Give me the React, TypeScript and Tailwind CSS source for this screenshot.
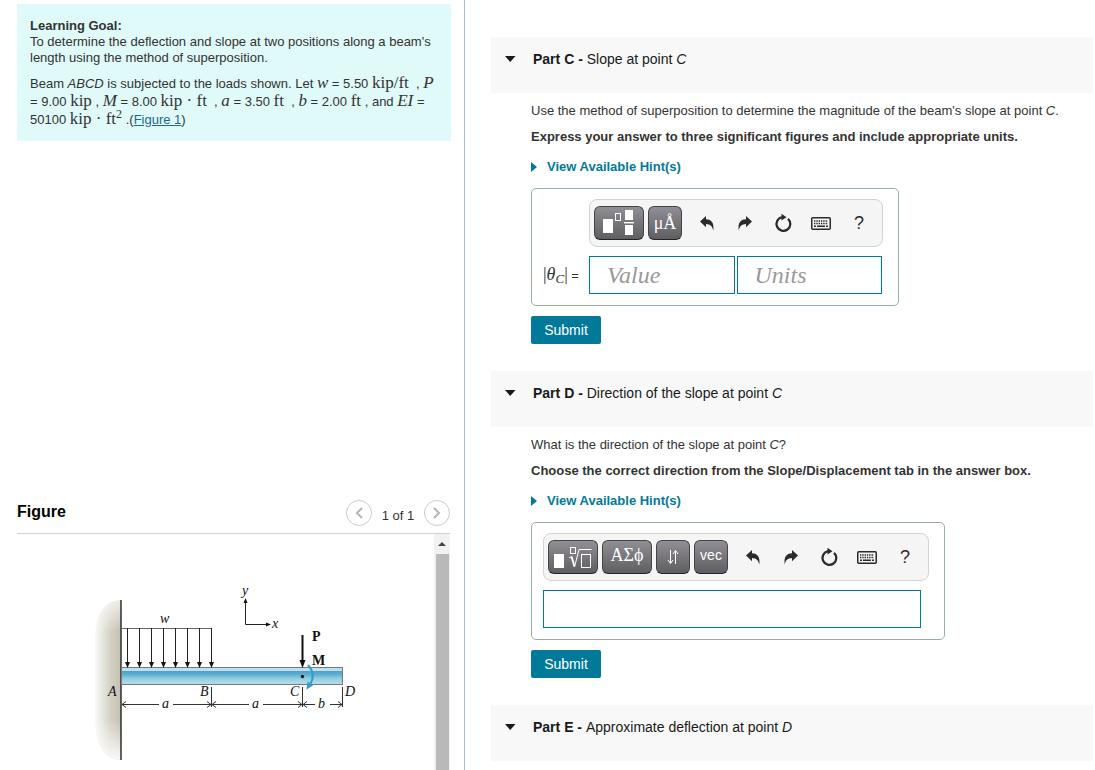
import type { ReactNode } from 'react';

const serif = "font-['Liberation_Serif','Times_New_Roman',serif]";

const loadArrows = [128, 140, 152, 164, 176, 188, 200, 212];

const Unit = ({ children }: { children: ReactNode }) => (
	<span className="font-['Liberation_Serif','Times_New_Roman',serif] text-[17px] leading-[0]">
		{children}
	</span>
);

const Var = ({ children }: { children: ReactNode }) => (
	<i className="font-['Liberation_Serif','Times_New_Roman',serif] text-[17px] leading-[0]">
		{children}
	</i>
);

const UndoIcon = ({ flip = false }: { flip?: boolean }) => (
	<svg
		width="14"
		height="15"
		viewBox="0 0 14 15"
		className={flip ? '-scale-x-100' : ''}
		fill="#2b2b2b"
	>
		<path d="M0 5.5 6 0v3.2C11.5 3.3 14.3 7 13.3 14.5 12.3 10.3 10.4 8.3 6 8.1v3.2z" />
	</svg>
);

const ResetIcon = () => (
	<svg width="18" height="20" viewBox="0 0 18 20">
		<path
			d="M14 5.800A6.900 6.900 0 1 1 8 4.200"
			fill="none"
			stroke="#2b2b2b"
			strokeWidth="2.3"
		/>
		<path d="M7.500 .8 12.500 4.200 7.500 7.600z" fill="#2b2b2b" />
	</svg>
);

const KeyboardIcon = () => (
	<svg width="20" height="13" viewBox="0 0 20 13" fill="none" stroke="#2b2b2b">
		<rect x=".75" y=".75" width="18.500" height="11.500" rx="1" strokeWidth="1.5" />
		<path d="M3 4h14M3 6.500h14" strokeWidth="1.4" strokeDasharray="1.4 .9" />
		<path d="M3 9.300h2M6 9.300h8M15 9.300h2" strokeWidth="1.4" />
	</svg>
);

const TemplatesIcon = () => (
	<svg width="32" height="28" viewBox="0 0 32 28" fill="#fff">
		<rect x="0" y="10" width="10" height="14" />
		<rect x="12.500" y="4.500" width="5" height="7" fill="none" stroke="#fff" />
		<rect x="22" y="1" width="8" height="10" />
		<rect x="21" y="13" width="10" height="1.400" />
		<rect x="22" y="16" width="8" height="10" />
	</svg>
);

const RootIcon = () => (
	<svg width="38" height="24" viewBox="0 0 38 24" fill="none" stroke="#fff">
		<rect x="0" y="9" width="10" height="14" fill="#fff" stroke="none" />
		<rect x="16.500" y="2.500" width="5" height="6" />
		<path d="M15 13l2.500-1.500" />
		<path d="M17.500 11.500l3 10" strokeWidth="2" />
		<path d="M20.500 22 25 4.500H37.500" />
		<rect x="27.500" y="9.500" width="9" height="13" />
	</svg>
);

const UpDownIcon = () => (
	<svg width="14" height="16" viewBox="0 0 14 16" fill="none" stroke="#fff">
		<path d="M4.500 1v13M2 11l2.500 3.500L7 11" />
		<path d="M9.500 15V2M7 5l2.500-3.500L12 5" />
	</svg>
);

const DarkButton = ({
	label,
	wide = false,
	children,
}: {
	label: string;
	wide?: boolean;
	children: ReactNode;
}) => (
	<button
		aria-label={label}
		className={`flex h-[34px] shrink-0 items-center justify-center rounded-md border border-[#444] border-b-[#222] bg-linear-to-b from-[#918f95] to-[#5f5e62] leading-7 text-white ${
			wide ? 'w-[50px]' : 'w-[34px]'
		}`}
	>
		{children}
	</button>
);

const ToolButton = ({ label, children }: { label: string; children: ReactNode }) => (
	<button
		aria-label={label}
		className="flex h-[34px] w-[38px] shrink-0 items-center justify-center text-lg text-[#2b2b2b]"
	>
		{children}
	</button>
);

const Toolbar = ({ children }: { children: ReactNode }) => (
	<div className="flex h-12 items-center rounded-lg border border-[#d2d4d2] bg-[#f5f5f5] px-1">
		<div className="mr-1.5 flex gap-1">{children}</div>
		<ToolButton label="Undo">
			<UndoIcon />
		</ToolButton>
		<ToolButton label="Redo">
			<UndoIcon flip />
		</ToolButton>
		<ToolButton label="Reset">
			<ResetIcon />
		</ToolButton>
		<ToolButton label="Keyboard shortcuts">
			<KeyboardIcon />
		</ToolButton>
		<ToolButton label="Help">?</ToolButton>
	</div>
);

const PartHeader = ({ part, children }: { part: string; children: ReactNode }) => (
	<button className="flex h-14 w-full items-start bg-[#f8f8f8] pt-3 pl-[13px] text-left text-sm text-[#1a1a1a]">
		<svg width="12" height="20" viewBox="0 0 12 20" className="mr-[17px]">
			<path d="M1 7h10.500L6.200 13z" fill="#1a1a1a" />
		</svg>
		<span>
			<b>Part {part} - </b>
			{children}
		</span>
	</button>
);

const Part = ({
	part,
	title,
	question,
	instruction,
	children,
}: {
	part: string;
	title: ReactNode;
	question: ReactNode;
	instruction: string;
	children: ReactNode;
}) => (
	<section className="mb-[27px]">
		<PartHeader part={part}>{title}</PartHeader>
		<div className="flex flex-col items-start pt-2 pl-10 text-[13px] leading-5">
			<p>{question}</p>
			<p className="mt-1.5 font-bold">{instruction}</p>
			<button className="mt-2.5 flex items-center font-bold text-[#007a9c]">
				<svg width="6" height="10" viewBox="0 0 6 10" className="mr-2.5">
					<path d="M0 0 6 5 0 10z" fill="#007a9c" />
				</svg>
				View Available Hint(s)
			</button>
			<div className="mt-[11px] h-[118px] rounded-[5px] border border-[#9aaf9f] pt-2.5 pr-[15px] pl-[11px]">
				{children}
			</div>
			<button className="mt-2.5 h-7 w-[70px] rounded-xs bg-[#00799b] text-sm text-white">
				Submit
			</button>
		</div>
	</section>
);

const BeamFigure = () => (
	<svg
		viewBox="17 534 416 236"
		className="h-[236px] w-[416px] shrink-0 font-['Liberation_Serif','Times_New_Roman',serif] text-sm"
		role="img"
		aria-label="Beam ABCD"
	>
		<defs>
			<linearGradient id="wall" x1="0" x2="1">
				<stop offset="0" stopColor="#c9c6b6" stopOpacity=".1" />
				<stop offset=".6" stopColor="#c9c6b6" stopOpacity=".8" />
				<stop offset="1" stopColor="#c3c0b0" />
			</linearGradient>
			<linearGradient id="wallEnds" x1="0" x2="0" y1="0" y2="1">
				<stop offset="0" stopColor="#fff" stopOpacity=".7" />
				<stop offset=".2" stopColor="#fff" stopOpacity="0" />
				<stop offset=".75" stopColor="#fff" stopOpacity="0" />
				<stop offset="1" stopColor="#fff" stopOpacity=".9" />
			</linearGradient>
			<linearGradient id="beam" x1="0" x2="0" y1="0" y2="1">
				<stop offset="0" stopColor="#c4dfe8" />
				<stop offset=".2" stopColor="#bfe0ec" />
				<stop offset=".22" stopColor="#4aa2c8" />
				<stop offset=".45" stopColor="#62b2d2" />
				<stop offset=".6" stopColor="#8cc8de" />
				<stop offset="1" stopColor="#b9e0ee" />
			</linearGradient>
		</defs>

		<path d="M121 600C102 602 95 616 95 640v80c0 24 9 39 26 40z" fill="url(#wall)" />
		<path d="M121 600C102 602 95 616 95 640v80c0 24 9 39 26 40z" fill="url(#wallEnds)" />
		<path d="M121 600v160" stroke="#222" strokeWidth="1.4" />

		<rect x="121.500" y="667.500" width="221" height="17" fill="url(#beam)" stroke="#777" />

		<path d="M121 628.500h91" stroke="#667" />
		{loadArrows.map((x) => (
			<g key={x}>
				<path d={`M${x - 0.5} 628v36`} stroke="#222" />
				<path d={`M${x - 3} 662h5l-2.500 6z`} fill="#111" />
			</g>
		))}

		<path d="M245.500 601v23.500h22" fill="none" stroke="#222" />
		<path d="M243.500 603h4l-2-5zM266 622.500v4l5-2z" fill="#111" />

		<path d="M302.500 635v28" stroke="#111" strokeWidth="2" />
		<path d="M299.500 660h6l-3 8z" fill="#111" />
		<circle cx="302.500" cy="676.500" r="1.700" fill="#111" />
		<path d="M308 665c6 7 6 14 1.500 20" fill="none" stroke="#2aa0d0" strokeWidth="2" />
		<path d="M306.500 689.500l1-8 5.500 4z" fill="#2aa0d0" />

		<g stroke="#333" fill="none">
			<path d="M211.500 687v20M302.500 687v20M342.500 687v20" />
			<path d="M122 704.500h37M173 704.500h38M212 704.500h37M263 704.500h39M303 704.500h12M330 704.500h12" />
			<path d="M126 701.500l-4 3 4 3M207 701.500l4 3-4 3M216 701.500l-4 3 4 3M298 701.500l4 3-4 3M307 701.500l-4 3 4 3M338 701.500l4 3-4 3" />
		</g>

		<g fontStyle="italic" fill="#111">
			<text x="160" y="623">w</text>
			<text x="242" y="595">y</text>
			<text x="272" y="628">x</text>
			<text x="108" y="696">A</text>
			<text x="200" y="696">B</text>
			<text x="290" y="696">C</text>
			<text x="345" y="696">D</text>
			<text x="162" y="708">a</text>
			<text x="252" y="708">a</text>
			<text x="318" y="708">b</text>
		</g>
		<g fontWeight="bold" fill="#111">
			<text x="312" y="641">P</text>
			<text x="312" y="665">M</text>
		</g>
	</svg>
);

const Chevron = ({ flip = false }: { flip?: boolean }) => (
	<svg
		width="8"
		height="12"
		viewBox="0 0 8 12"
		className={flip ? '-scale-x-100' : ''}
		fill="none"
		stroke="#b5b5b5"
		strokeWidth="2"
	>
		<path d="M7 1 2 6l5 5" />
	</svg>
);

const Sidebar = () => (
	<aside className="flex h-full w-[465px] shrink-0 flex-col border-r border-[#a9b9d6] pt-1 pr-[13px] pl-[17px]">
		<div className="bg-[#e0f9f9] px-[13px] pt-3.5 pb-3 text-[13px] leading-4 whitespace-nowrap text-[#333]">
			<b>Learning Goal:</b>
			<p>
				To determine the deflection and slope at two positions along a beam's
				<br />
				length using the method of superposition.
			</p>
			<p className="mt-[9px] leading-[18px]">
				Beam <i>ABCD</i> is subjected to the loads shown. Let <Var>w</Var> = 5.50{' '}
				<Unit>kip/ft</Unit>&nbsp; , <Var>P</Var>
				<br />= 9.00 <Unit>kip</Unit> , <Var>M</Var> = 8.00 <Unit>kip · ft</Unit>&nbsp; ,{' '}
				<Var>a</Var> = 3.50 <Unit>ft</Unit>&nbsp; , <Var>b</Var> = 2.00 <Unit>ft</Unit>{' '}
				, and <Var>EI</Var> =
				<br />
				50100{' '}
				<Unit>
					kip · ft<sup className="text-xs leading-[0]">2</sup>
				</Unit>{' '}
				.(
				<a href="#figure" className="text-[#1b6c8c] underline">
					Figure 1
				</a>
				)
			</p>
		</div>

		<div
			id="figure"
			className="mt-auto mr-px flex items-center border-b border-[#ccd3cc] pb-[7px]"
		>
			<h2 className="grow pb-0.5 text-base font-bold text-black">Figure</h2>
			<button
				aria-label="Previous figure"
				className="flex size-[26px] items-center justify-center rounded-full border border-[#ccc]"
			>
				<Chevron />
			</button>
			<span className="w-[52px] pt-1.5 text-center text-[13px]">1 of 1</span>
			<button
				aria-label="Next figure"
				className="flex size-[26px] items-center justify-center rounded-full border border-[#ccc]"
			>
				<Chevron flip />
			</button>
		</div>
		<div className="mr-px flex justify-between overflow-hidden">
			<BeamFigure />
			<div className="flex w-4 shrink-0 flex-col items-center bg-[#f1f1f1]">
				<svg width="8" height="20" viewBox="0 0 8 20" className="shrink-0">
					<path d="M0 12h8L4 8z" fill="#444" />
				</svg>
				<div className="w-[13px] grow bg-[#b9b9b9]" />
			</div>
		</div>
	</aside>
);

const App = () => (
	<div className="flex h-screen overflow-hidden bg-white font-['Liberation_Sans',Arial,sans-serif] text-[#333]">
		<Sidebar />
		<main className="min-w-0 grow overflow-hidden pt-[37px] pr-0.5 pl-[26px]">
			<Part
				part="C"
				title={
					<>
						Slope at point <i>C</i>
					</>
				}
				question={
					<>
						Use the method of superposition to determine the magnitude of the beam's
						slope at point <i>C</i>.
					</>
				}
				instruction="Express your answer to three significant figures and include appropriate units."
			>
				<div className="grid grid-cols-[46px_1fr] items-center gap-y-[9px]">
					<div className="col-start-2">
						<Toolbar>
							<DarkButton label="Templates" wide>
								<TemplatesIcon />
							</DarkButton>
							<DarkButton label="Units">
								<span className={`${serif} text-lg`}>μÅ</span>
							</DarkButton>
						</Toolbar>
					</div>
					<label htmlFor="value" className="whitespace-nowrap">
						<span className={`${serif} text-lg leading-none`}>
							|<i>θ</i>
							<sub className="text-[13px] leading-none italic">C</sub>|
						</span>{' '}
						=
					</label>
					<div className="flex gap-0.5 pr-px">
						<input
							id="value"
							placeholder="Value"
							className="h-[38px] w-0 grow border border-[#00799b] px-[17px] font-['Liberation_Serif','Times_New_Roman',serif] text-2xl italic placeholder:text-[#999]"
						/>
						<input
							aria-label="Units"
							placeholder="Units"
							className="h-[38px] w-0 grow border border-[#00799b] px-[17px] font-['Liberation_Serif','Times_New_Roman',serif] text-2xl italic placeholder:text-[#999]"
						/>
					</div>
				</div>
			</Part>

			<Part
				part="D"
				title={
					<>
						Direction of the slope at point <i>C</i>
					</>
				}
				question={
					<>
						What is the direction of the slope at point <i>C</i>?
					</>
				}
				instruction="Choose the correct direction from the Slope/Displacement tab in the answer box."
			>
				<Toolbar>
					<DarkButton label="Templates" wide>
						<RootIcon />
					</DarkButton>
					<DarkButton label="Symbols" wide>
						<span className={`${serif} pb-1 text-lg`}>ΑΣϕ</span>
					</DarkButton>
					<DarkButton label="Slope/Displacement">
						<UpDownIcon />
					</DarkButton>
					<DarkButton label="Vectors">
						<span className="pb-1 text-sm">vec</span>
					</DarkButton>
				</Toolbar>
				<div className="mt-[9px] pr-2">
					<input
						aria-label="Direction of the slope"
						className="h-[38px] w-full border border-[#00799b] px-4 text-2xl"
					/>
				</div>
			</Part>

			<PartHeader part="E">
				Approximate deflection at point <i>D</i>
			</PartHeader>
		</main>
	</div>
);

export default App;
